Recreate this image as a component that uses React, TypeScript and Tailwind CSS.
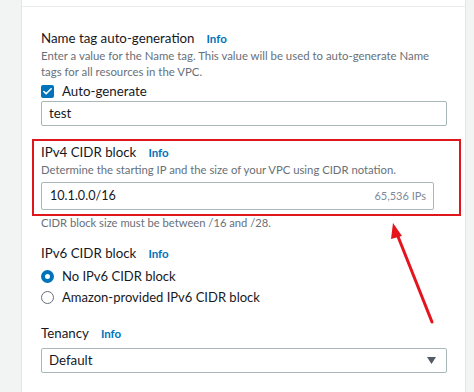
import { Check } from 'lucide-react';

const Info = () => (
  <span className="ml-[12px] text-[11.5px] font-bold text-[#0073bb]">Info</span>
);

const App = () => {
  return (
    <div className="relative w-[474px] h-[392px] overflow-hidden bg-[#f2f3f3] font-['Lato',sans-serif] text-[#16191f]">
      <div className="ml-[21px] w-[445px] h-full bg-white border-x border-[#e3e6e6] pt-[6px]">
        <div className="border-t border-[#eaeded] pl-[19px] pr-[18px] pt-[23px]">
          {/* Name tag */}
          <div className="flex items-baseline text-[13.3px] leading-[16px]">
            Name tag auto-generation <Info />
          </div>
          <p className="mt-[1px] text-[11.4px] leading-[16px] text-[#687078]">
            Enter a value for the Name tag. This value will be used to auto-generate Name tags for all resources in the VPC.
          </p>
          <label className="mt-[3px] flex items-center gap-[8px] text-[13.3px] leading-[16px]">
            <span className="w-[13px] h-[13px] rounded-[2px] bg-[#0073bb] flex items-center justify-center">
              <Check className="w-[11px] h-[11px] text-white" strokeWidth={3.5} />
            </span>
            Auto-generate
          </label>
          <div className="mt-[2px] h-[25px] border border-[#aab7b8] rounded-[2px] px-[7px] flex items-center text-[13.3px]">
            test
          </div>

          {/* IPv4 */}
          <div className="mt-[13px] ml-[-9px] w-[429px] border-2 border-[#e0161d] pl-[7px] pt-[3px] pb-[4px]">
            <div className="flex items-baseline text-[13.3px] leading-[16px]">
              IPv4 CIDR block <Info />
            </div>
            <p className="mt-[1px] text-[11.3px] leading-[16px] text-[#687078]">
              Determine the starting IP and the size of your VPC using CIDR notation.
            </p>
            <div className="mt-[4px] w-[393px] h-[28px] border border-[#aab7b8] rounded-[2px] pl-[8px] pr-[7px] flex items-center justify-between">
              <span className="text-[12.6px]">10.1.0.0/16</span>
              <span className="text-[11px] text-[#7d8998]">65,536 IPs</span>
            </div>
          </div>
          <p className="text-[11.2px] leading-[14px] text-[#687078]">
            CIDR block size must be between /16 and /28.
          </p>

          {/* IPv6 */}
          <div className="mt-[15px] flex items-baseline text-[13.3px] leading-[16px]">
            IPv6 CIDR block <Info />
          </div>
          <div className="mt-[6px] flex flex-col gap-[4px]">
            <label className="flex items-center gap-[8px] text-[13px] leading-[17px]">
              <span className="w-[13px] h-[13px] rounded-full border-[4px] border-[#0073bb] bg-white" />
              No IPv6 CIDR block
            </label>
            <label className="flex items-center gap-[8px] text-[13px] leading-[17px]">
              <span className="w-[13px] h-[13px] rounded-full border border-[#687078] bg-white" />
              Amazon-provided IPv6 CIDR block
            </label>
          </div>

          {/* Tenancy */}
          <div className="mt-[19px] flex items-baseline text-[13.3px] leading-[16px]">
            Tenancy <Info />
          </div>
          <div className="mt-[6px] h-[25px] border border-[#aab7b8] rounded-[2px] pl-[7px] pr-[10px] flex items-center justify-between text-[13.3px]">
            <span>Default</span>
            <svg width="9" height="7" viewBox="0 0 9 7">
              <path d="M0 0 H9 L4.5 7 Z" fill="#545b64" />
            </svg>
          </div>
        </div>
      </div>

      {/* annotation arrow */}
      <svg className="absolute left-0 top-0 pointer-events-none" width="474" height="392">
        <line x1="432" y1="322" x2="397" y2="234" stroke="#e5131d" strokeWidth="3" strokeLinecap="round" />
        <path d="M393 223 L402 236 L391 239 Z" fill="#e5131d" />
      </svg>
    </div>
  );
};

export default App;
